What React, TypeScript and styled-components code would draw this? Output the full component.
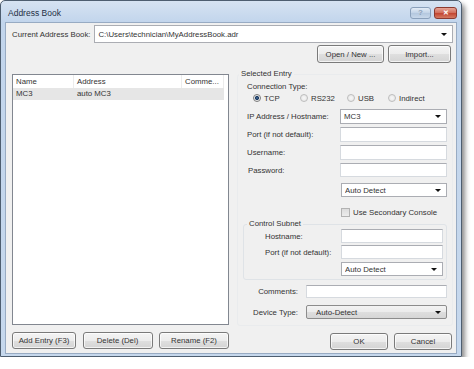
import React from 'react';
import styled, { createGlobalStyle } from 'styled-components';

const GlobalStyle = createGlobalStyle`
	html, body {
		margin: 0;
		padding: 0;
		background: #ffffff;
	}
	body {
		font-family: "Liberation Sans", Arial, sans-serif;
		font-size: 7.8px;
		color: #333333;
	}
	* {
		box-sizing: border-box;
	}
`;

function App() {
	return (
		<>
			<GlobalStyle />
			<WindowStyled>
				<TitleBar>
					<Title>Address Book</Title>
					<TitleButtons>
						<HelpButton>?</HelpButton>
						<CloseButton>✕</CloseButton>
					</TitleButtons>
				</TitleBar>
				<DialogBody>
					<TopRow>
						<span>Current Address Book:</span>
						<Combo $height={ 18 } $indent={ 3 }>
							<ComboText>C:\Users\technician\MyAddressBook.adr</ComboText>
							<Arrow />
						</Combo>
					</TopRow>
					<FileButtons>
						<Button $width={ 67 } $height={ 18 }>Open / New ...</Button>
						<Button $width={ 63 } $height={ 18 }>Import...</Button>
					</FileButtons>

					<Main>
						<LeftColumn>
							<ListBox>
								<ListGrid>
									<HeaderCell>Name</HeaderCell>
									<HeaderCell>Address</HeaderCell>
									<HeaderCell>Comme...</HeaderCell>
								</ListGrid>
								<ListGrid $selected>
									<RowCell>MC3</RowCell>
									<RowCell>auto MC3</RowCell>
									<RowCell />
								</ListGrid>
							</ListBox>
							<ListButtons>
								<Button $width={ 64 } $height={ 17 }>Add Entry (F3)</Button>
								<Button $width={ 70 } $height={ 17 }>Delete (Del)</Button>
								<Button $width={ 70 } $height={ 17 }>Rename (F2)</Button>
							</ListButtons>
						</LeftColumn>

						<RightColumn>
							<Group>
								<Legend $shift={ -8 }>Selected Entry</Legend>
								<Row $height={ 10 } $top={ 2 }>
									<Label>Connection Type:</Label>
								</Row>
								<RadioRow>
									<RadioItem $width={ 47 }><Radio $checked />TCP</RadioItem>
									<RadioItem $width={ 47 }><Radio />RS232</RadioItem>
									<RadioItem $width={ 41 }><Radio />USB</RadioItem>
									<RadioItem><Radio />Indirect</RadioItem>
								</RadioRow>

								<Row $height={ 15 } $top={ 6 }>
									<Label>IP Address / Hostname:</Label>
									<Combo $width={ 107 } $indent={ 3 }>
										<ComboText>MC3</ComboText>
										<Arrow />
									</Combo>
								</Row>
								<Row $height={ 15 } $top={ 3 }>
									<Label>Port (if not default):</Label>
									<TextInput $width={ 107 } readOnly />
								</Row>
								<Row $height={ 15 } $top={ 3 }>
									<Label>Username:</Label>
									<TextInput $width={ 107 } readOnly />
								</Row>
								<Row $height={ 14 } $top={ 3 }>
									<Label $indent={ 1 }>Password:</Label>
									<TextInput $width={ 107 } readOnly />
								</Row>
								<Row $height={ 14 } $top={ 6 }>
									<Label />
									<Combo $width={ 106 } $indent={ 3 }>
										<ComboText>Auto Detect</ComboText>
										<Arrow />
									</Combo>
								</Row>
								<CheckRow>
									<CheckBox />
									Use Secondary Console
								</CheckRow>

								<SubGroup>
									<Legend $shift={ -18 }>Control Subnet</Legend>
									<Row $height={ 14 } $top={ 0 }>
										<Label>Hostname:</Label>
										<TextInput $width={ 102 } readOnly />
									</Row>
									<Row $height={ 14 } $top={ 2 }>
										<Label>Port (if not default):</Label>
										<TextInput $width={ 102 } readOnly />
									</Row>
									<Row $height={ 14 } $top={ 3 }>
										<Label />
										<Combo $width={ 102 } $indent={ 3 }>
											<ComboText>Auto Detect</ComboText>
											<Arrow />
										</Combo>
									</Row>
								</SubGroup>

								<Row $height={ 13 } $top={ 5 }>
									<Label $right>Comments:</Label>
									<TextInput $width={ 141 } readOnly />
								</Row>
								<Row $height={ 14 } $top={ 7 }>
									<Label $right>Device Type:</Label>
									<Combo $width={ 141 } $indent={ 9 } $raised>
										<ComboText>Auto-Detect</ComboText>
										<Arrow />
									</Combo>
								</Row>
							</Group>
							<DialogButtons>
								<Button $width={ 58 } $height={ 17 }>OK</Button>
								<Button $width={ 58 } $height={ 17 }>Cancel</Button>
							</DialogButtons>
						</RightColumn>
					</Main>
				</DialogBody>
			</WindowStyled>
		</>
	);
}

const WindowStyled = styled.div`
	width: 462px;
	display: flex;
	flex-direction: column;
	border: 1px solid #4e5e70;
	border-radius: 5px 5px 0 0;
	background: linear-gradient(to bottom, #d6e3f2 0px, #c2d5ec 21px, #c6d8ed 100%);
	box-shadow: 3px 4px 5px rgba(0, 0, 0, 0.45);
`;

const TitleBar = styled.div`
	height: 21px;
	display: flex;
	align-items: center;
	padding: 2px 4px 0 7px;
`;

const Title = styled.span`
	font-size: 8.5px;
	color: #1e2f44;
`;

const TitleButtons = styled.div`
	margin-left: auto;
	display: flex;
	gap: 3px;
`;

const HelpButton = styled.div`
	width: 21px;
	height: 12px;
	border: 1px solid #8aa0bb;
	border-radius: 3px;
	background: linear-gradient(to bottom, #e3ecf6, #c1d2e6 50%, #b3c7de 51%, #c8d8ea);
	color: #8ea2b8;
	font-size: 8px;
	font-weight: bold;
	line-height: 10px;
	text-align: center;
`;

const CloseButton = styled.div`
	width: 23px;
	height: 12px;
	border: 1px solid #8b3a30;
	border-radius: 3px;
	background: linear-gradient(to bottom, #e6a598, #d06b58 50%, #c2432f 51%, #d47a62);
	color: #ffffff;
	font-size: 7px;
	font-weight: bold;
	line-height: 10px;
	text-align: center;
`;

const DialogBody = styled.div`
	margin: 0 4px 2px;
	padding: 2px 3px 3px 6px;
	background: #f0f0f0;
	border: 1px solid #98abc3;
`;

const TopRow = styled.div`
	height: 18px;
	display: flex;
	align-items: center;
	gap: 4px;
`;

const FileButtons = styled.div`
	display: flex;
	justify-content: flex-end;
	gap: 4px;
	margin-top: 2px;
	padding-right: 2px;
`;

const Button = styled.button<{ $width: number; $height: number }>`
	width: ${ ({ $width }) => $width }px;
	height: ${ ({ $height }) => $height }px;
	padding: 0;
	border: 1px solid #7a7a7a;
	border-radius: 3px;
	background: linear-gradient(to bottom, #f4f4f4 0%, #ececec 50%, #dfdfdf 51%, #d4d4d4 100%);
	box-shadow: inset 0 0 0 1px rgba(255, 255, 255, 0.7);
	font-family: inherit;
	font-size: 7.8px;
	color: #333333;
`;

const Combo = styled.div<{ $width?: number; $height?: number; $indent: number; $raised?: boolean }>`
	${ ({ $width }) => $width ? `width: ${ $width }px;` : 'flex: 1;' }
	height: ${ ({ $height }) => $height ? `${ $height }px` : '100%' };
	display: flex;
	align-items: center;
	padding: 0 5px 0 ${ ({ $indent }) => $indent }px;
	border: 1px solid ${ ({ $raised }) => $raised ? '#8c8c8c' : '#abadb3' };
	border-radius: ${ ({ $raised }) => $raised ? '2px' : '0' };
	background: ${ ({ $raised }) => $raised
		? 'linear-gradient(to bottom, #f3f3f3 0%, #ebebeb 50%, #dedede 51%, #d6d6d6 100%)'
		: '#ffffff' };
`;

const ComboText = styled.span`
	flex: 1;
	white-space: nowrap;
	overflow: hidden;
`;

const Arrow = styled.span`
	width: 0;
	height: 0;
	border-left: 3px solid transparent;
	border-right: 3px solid transparent;
	border-top: 3px solid #111111;
`;

const TextInput = styled.input<{ $width: number }>`
	width: ${ ({ $width }) => $width }px;
	height: 100%;
	margin: 0;
	padding: 0;
	border: 1px solid #d6dadf;
	border-top-color: #abadb3;
	background: #ffffff;
	outline: none;
`;

const Main = styled.div`
	display: grid;
	grid-template-columns: 217px 1fr;
	column-gap: 8px;
	margin-top: 6px;
`;

const LeftColumn = styled.div`
	display: flex;
	flex-direction: column;
`;

const ListBox = styled.div`
	height: 251px;
	margin-top: 5px;
	background: #ffffff;
	border: 1px solid #828790;
`;

const ListGrid = styled.div<{ $selected?: boolean }>`
	display: grid;
	grid-template-columns: 61px 108px 42px;
	height: ${ ({ $selected }) => $selected ? 12 : 13 }px;
	& > * {
		background: ${ ({ $selected }) => $selected ? '#e6e6e6' : '#ffffff' };
	}
`;

const HeaderCell = styled.div`
	padding-left: 3px;
	line-height: 13px;
	border-right: 1px solid #ececec;
	white-space: nowrap;
`;

const RowCell = styled.div`
	padding-left: 3px;
	line-height: 12px;
`;

const ListButtons = styled.div`
	display: flex;
	justify-content: space-between;
	margin-top: 7px;
`;

const RightColumn = styled.div`
	display: flex;
	flex-direction: column;
`;

const Group = styled.fieldset`
	margin: 0;
	padding: 0 5px 6px 9px;
	border: 1px solid #e9ebed;
	border-radius: 3px;
	min-width: 0;
`;

const SubGroup = styled.fieldset`
	margin: 2px 0 0 -4px;
	padding: 0 3px 3px 21px;
	border: 1px solid #dfe3e7;
	border-radius: 3px;
	min-width: 0;
`;

const Legend = styled.legend<{ $shift: number }>`
	margin-left: ${ ({ $shift }) => $shift }px;
	padding: 0 2px;
	line-height: 10px;
	font-size: 7.8px;
`;

const Row = styled.div<{ $height: number; $top: number }>`
	height: ${ ({ $height }) => $height }px;
	margin-top: ${ ({ $top }) => $top }px;
	display: flex;
	align-items: center;
`;

const Label = styled.span<{ $right?: boolean; $indent?: number }>`
	flex: 1;
	padding-left: ${ ({ $indent }) => $indent || 0 }px;
	padding-right: ${ ({ $right }) => $right ? 8 : 0 }px;
	text-align: ${ ({ $right }) => $right ? 'right' : 'left' };
	white-space: nowrap;
`;

const RadioRow = styled.div`
	height: 10px;
	margin-top: 2px;
	padding-left: 6px;
	display: flex;
	align-items: center;
`;

const RadioItem = styled.label<{ $width?: number }>`
	${ ({ $width }) => $width ? `width: ${ $width }px;` : '' }
	display: flex;
	align-items: center;
	gap: 3px;
`;

const Radio = styled.span<{ $checked?: boolean }>`
	width: 8px;
	height: 8px;
	border-radius: 50%;
	border: 1px solid ${ ({ $checked }) => $checked ? '#7b7b7b' : '#bdbdbd' };
	background: ${ ({ $checked }) => $checked
		? 'radial-gradient(circle, #4a6f9c 0, #1c3b62 1.6px, #e9e9e9 2.4px, #f7f7f7 100%)'
		: 'radial-gradient(circle, #f7f7f7 0, #e3e3e3 100%)' };
`;

const CheckRow = styled.div`
	height: 9px;
	margin-top: 11px;
	padding-left: 94px;
	display: flex;
	align-items: center;
	gap: 3px;
`;

const CheckBox = styled.span`
	width: 9px;
	height: 9px;
	border: 1px solid #b2b2b2;
	background: linear-gradient(to bottom, #dcdcdc, #ececec);
`;

const DialogButtons = styled.div`
	display: flex;
	justify-content: flex-end;
	gap: 6px;
	margin-top: 7px;
	padding-right: 1px;
`;

export default App;
